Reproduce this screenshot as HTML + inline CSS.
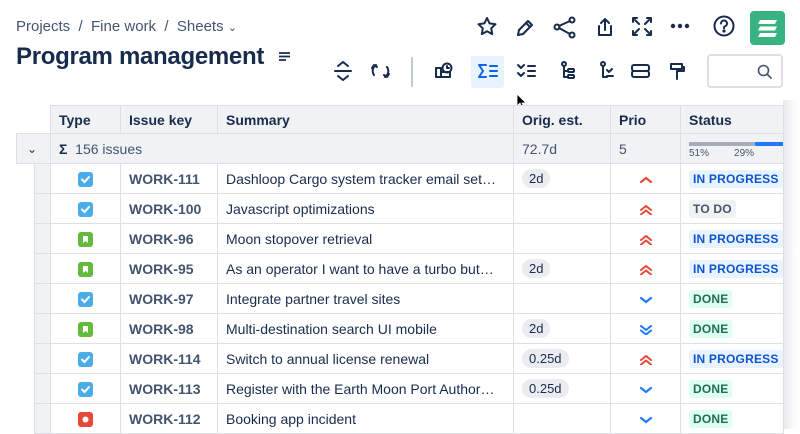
<!DOCTYPE html>
<html><head><style>
*{box-sizing:border-box;margin:0;padding:0}
body{width:800px;height:429px;overflow:hidden;background:#fff;font-family:"Liberation Sans",sans-serif;color:#172b4d;position:relative}
.abs{position:absolute}
.bc{left:16px;top:18px;font-size:15px;color:#44546f;white-space:nowrap}
.title{left:16px;top:43px;font-size:24px;font-weight:bold;color:#172b4d;letter-spacing:-0.3px}
svg{position:absolute}
table{position:absolute;left:16px;top:105px;border-collapse:collapse;font-size:14px;table-layout:fixed;width:767px}
td,th{height:30px;border:1px solid #dcdfe4;padding:0 8px;white-space:nowrap;overflow:hidden;text-overflow:ellipsis;text-align:left}
th{height:28px;background:#f1f2f4;font-weight:bold;color:#172b4d}
.grp td{background:#f1f2f4;color:#44546f}
.key{color:#44546f;font-weight:bold}
.pill{display:inline-block;background:#ebecf0;border-radius:10px;padding:2px 7px;font-size:13px;color:#172b4d}
.lz{display:inline-block;font-size:12px;font-weight:bold;padding:2px 4px;border-radius:3px;letter-spacing:.2px}
.ip{background:#e9f2ff;color:#0c55cf}
.td{background:#f1f2f4;color:#44546f}
.dn{background:#dcfff1;color:#216e4e}
.ic{display:inline-block;width:15px;height:15px;border-radius:3px;position:relative;vertical-align:middle}
.ic svg{left:0;top:0}
.task{background:#4bade8}
.story{background:#63ba3c}
.bug{background:#e5493a}
.g1{border:none;background:#fff;border-right:1px solid #dcdfe4}
.g2{background:#f1f2f4;border-left:none}
.pr{text-align:center;position:relative}
.pr svg{position:static;vertical-align:middle}
</style></head><body>
<div class="abs bc">Projects &nbsp;/&nbsp; Fine work &nbsp;/&nbsp; Sheets <span style="font-size:11px">&#8964;</span></div>
<div class="abs title">Program management</div>
<svg style="left:278px;top:51px" width="14" height="12" viewBox="0 0 14 12"><path d="M1 2h11M1 5.5h11M1 9h7" stroke="#172b4d" stroke-width="1.8"/></svg>
<svg style="left:470px;top:14px" width="320" height="30" viewBox="0 0 320 30" fill="none" stroke="#172b4d" stroke-width="2" stroke-linejoin="round" stroke-linecap="round">
<path d="M17 4l2.6 5.4 5.9.8-4.3 4.1 1 5.8-5.2-2.8-5.2 2.8 1-5.8-4.3-4.1 5.9-.8z"/>
<path d="M48 21l1-5 9-9 4 4-9 9z M56 9l4 4"/>
<circle cx="87" cy="13" r="2.5"/><circle cx="102" cy="6" r="2.5"/><circle cx="102" cy="21" r="2.5"/><path d="M89 12l11-5M89 14l11 6"/>
<path d="M135 5v11M131 9l4-4 4 4M129 12v9h12v-9"/>
<path d="M163 8V4h4M177 4h4v4M163 17v4h4M181 17v4h-4M165 6l4 4M179 6l-4 4M165 19l4-4M179 19l-4-4"/>
<circle cx="203" cy="12" r="1.2" fill="#172b4d"/><circle cx="210" cy="12" r="1.2" fill="#172b4d"/><circle cx="217" cy="12" r="1.2" fill="#172b4d"/>
<circle cx="254" cy="12" r="9.5"/><path d="M251 9.5a3 3 0 1 1 4 2.8c-1 .4-1 1-1 2"/><circle cx="254" cy="17" r=".6" fill="#172b4d"/>
</svg>
<div class="abs" style="left:750px;top:11px;width:35px;height:34px;background:#36b37e;border-radius:4px"></div>
<svg style="left:750px;top:11px" width="35" height="34" viewBox="0 0 35 34"><path d="M10 9h17l-2 4H8zM10 15.5h17l-2 4H8zM10 22h17l-2 4H8z" fill="#fff"/></svg>
<svg style="left:330px;top:56px" width="470" height="32" viewBox="0 0 470 32" fill="none" stroke="#172b4d" stroke-width="2" stroke-linejoin="round" stroke-linecap="round">
<path d="M5 15h16M8 10l5-4 5 4M8 20l5 4 5-4"/>
<path d="M46 9a7 7 0 0 0-2 10M55 21a7 7 0 0 0 2-10M42 12l2-3 3 2M59 18l-2 3-3-2"/>
<path d="M82 2v28" stroke="#c1c7d0" stroke-width="2"/>
<path d="M106 12h5v9h-5zM111 16h9v5h-9z"/><circle cx="117" cy="12" r="4.5"/><path d="M117 10v2h2"/>
<rect x="141" y="-2" width="33" height="34" rx="3" fill="#e9f2ff" stroke="none"/>
<path d="M156 9h-7l4 6-4 6h7" stroke="#0c66e4"/><path d="M160 10h7M160 15h7M160 20h7" stroke="#0c66e4"/>
<path d="M188 9l3 3 3-3M188 17l3 3 3-3M198 10h7M198 15h7M198 20h7"/>
<circle cx="234" cy="8" r="2"/><path d="M234 10v11h4M234 15h4"/><rect x="238" y="13" width="6" height="3" rx="1"/><rect x="238" y="19" width="6" height="3" rx="1"/>
<circle cx="273" cy="8" r="2"/><path d="M273 10v11h4M277 14l2 2 3-3M277 20h6"/>
<rect x="302" y="9" width="17" height="6" rx="2"/><rect x="302" y="15" width="17" height="6" rx="2"/>
<path d="M341 8h11v5h-11zM352 11h2v4h-7v3M347 18v5"/>
</svg>
<div class="abs" style="left:707px;top:54px;width:76px;height:34px;border:2px solid #dcdfe4;border-radius:4px"></div>
<svg style="left:757px;top:64px" width="16" height="16" viewBox="0 0 16 16" fill="none" stroke="#44546f" stroke-width="1.6"><circle cx="6.5" cy="6.5" r="5"/><path d="M10 10l4.5 4.5"/></svg>
<svg style="left:516px;top:93px" width="12" height="16" viewBox="0 0 12 16"><path d="M1 1v12l3-3 2 5 2-1-2-4h4z" fill="#000" stroke="#fff" stroke-width=".8"/></svg>
<div class="abs" style="left:783px;top:100px;width:17px;height:329px;background:linear-gradient(90deg,#e5e7ea,#fafbfb 60%,#fff)"></div>
<svg width="0" height="0" style="display:none"><defs>
<symbol id="up" viewBox="0 0 14 10"><path d="M2 7l5-4 5 4" fill="none" stroke="#e5493a" stroke-width="2.2" stroke-linecap="round"/></symbol>
<symbol id="up2" viewBox="0 0 14 10"><path d="M2 5l5-4 5 4M2 9.5l5-4 5 4" fill="none" stroke="#e5493a" stroke-width="2" stroke-linecap="round"/></symbol>
<symbol id="dn" viewBox="0 0 14 10"><path d="M2 3l5 4 5-4" fill="none" stroke="#1d7afc" stroke-width="2.2" stroke-linecap="round"/></symbol>
<symbol id="dn2" viewBox="0 0 14 10"><path d="M2 1l5 4 5-4M2 5.5l5 4 5-4" fill="none" stroke="#1d7afc" stroke-width="2" stroke-linecap="round"/></symbol>
<symbol id="chk" viewBox="0 0 15 15"><path d="M4 7.5l2.5 2.5 4.5-5" fill="none" stroke="#fff" stroke-width="2" stroke-linecap="round"/></symbol>
<symbol id="bm" viewBox="0 0 15 15"><path d="M5 4h5v7l-2.5-2-2.5 2z" fill="#fff"/></symbol>
<symbol id="bg" viewBox="0 0 15 15"><circle cx="7.5" cy="7.5" r="3" fill="#fff"/></symbol>
</defs></svg>
<table>
<colgroup><col style="width:18px"><col style="width:16px"><col style="width:70px"><col style="width:97px"><col style="width:296px"><col style="width:97px"><col style="width:70px"><col style="width:103px"></colgroup>
<tr><th style="background:#fff;border:none;border-bottom:1px solid #dcdfe4"></th><th style="background:#fff;border:none;border-bottom:1px solid #dcdfe4"></th><th>Type</th><th>Issue key</th><th>Summary</th><th>Orig. est.</th><th>Prio</th><th>Status</th></tr>
<tr class="grp"><td colspan="2" style="padding:0 0 0 10px;font-size:12px;color:#172b4d">&#8964;</td><td colspan="3" style="color:#44546f"><b style="color:#172b4d">Σ</b>&nbsp; 156 issues</td><td>72.7d</td><td>5</td><td style="padding-top:4px"><div style="height:4px;background:#a5adba;position:relative;width:95px"><div style="position:absolute;left:66px;width:29px;height:4px;background:#1d7afc"></div></div><div style="font-size:10px;color:#44546f;margin-top:2px">51% &nbsp; &nbsp; &nbsp; &nbsp; 29%</div></td></tr>
<tr><td class="g1"></td><td class="g2"></td><td style="text-align:center"><span class="ic task"><svg width="15" height="15"><use href="#chk"/></svg></span></td><td class="key">WORK-111</td><td>Dashloop Cargo system tracker email set…</td><td><span class="pill">2d</span></td><td class="pr"><svg width="14" height="10"><use href="#up"/></svg></td><td><span class="lz ip">IN PROGRESS</span></td></tr>
<tr><td class="g1"></td><td class="g2"></td><td style="text-align:center"><span class="ic task"><svg width="15" height="15"><use href="#chk"/></svg></span></td><td class="key">WORK-100</td><td>Javascript optimizations</td><td></td><td class="pr"><svg width="14" height="10"><use href="#up2"/></svg></td><td><span class="lz td">TO DO</span></td></tr>
<tr><td class="g1"></td><td class="g2"></td><td style="text-align:center"><span class="ic story"><svg width="15" height="15"><use href="#bm"/></svg></span></td><td class="key">WORK-96</td><td>Moon stopover retrieval</td><td></td><td class="pr"><svg width="14" height="10"><use href="#up2"/></svg></td><td><span class="lz ip">IN PROGRESS</span></td></tr>
<tr><td class="g1"></td><td class="g2"></td><td style="text-align:center"><span class="ic story"><svg width="15" height="15"><use href="#bm"/></svg></span></td><td class="key">WORK-95</td><td>As an operator I want to have a turbo but…</td><td><span class="pill">2d</span></td><td class="pr"><svg width="14" height="10"><use href="#up2"/></svg></td><td><span class="lz ip">IN PROGRESS</span></td></tr>
<tr><td class="g1"></td><td class="g2"></td><td style="text-align:center"><span class="ic task"><svg width="15" height="15"><use href="#chk"/></svg></span></td><td class="key">WORK-97</td><td>Integrate partner travel sites</td><td></td><td class="pr"><svg width="14" height="10"><use href="#dn"/></svg></td><td><span class="lz dn">DONE</span></td></tr>
<tr><td class="g1"></td><td class="g2"></td><td style="text-align:center"><span class="ic story"><svg width="15" height="15"><use href="#bm"/></svg></span></td><td class="key">WORK-98</td><td>Multi-destination search UI mobile</td><td><span class="pill">2d</span></td><td class="pr"><svg width="14" height="10"><use href="#dn2"/></svg></td><td><span class="lz dn">DONE</span></td></tr>
<tr><td class="g1"></td><td class="g2"></td><td style="text-align:center"><span class="ic task"><svg width="15" height="15"><use href="#chk"/></svg></span></td><td class="key">WORK-114</td><td>Switch to annual license renewal</td><td><span class="pill">0.25d</span></td><td class="pr"><svg width="14" height="10"><use href="#up2"/></svg></td><td><span class="lz ip">IN PROGRESS</span></td></tr>
<tr><td class="g1"></td><td class="g2"></td><td style="text-align:center"><span class="ic task"><svg width="15" height="15"><use href="#chk"/></svg></span></td><td class="key">WORK-113</td><td>Register with the Earth Moon Port Author…</td><td><span class="pill">0.25d</span></td><td class="pr"><svg width="14" height="10"><use href="#dn"/></svg></td><td><span class="lz dn">DONE</span></td></tr>
<tr><td class="g1"></td><td class="g2"></td><td style="text-align:center"><span class="ic bug"><svg width="15" height="15"><use href="#bg"/></svg></span></td><td class="key">WORK-112</td><td>Booking app incident</td><td></td><td class="pr"><svg width="14" height="10"><use href="#dn"/></svg></td><td><span class="lz dn">DONE</span></td></tr>
</table>
</body></html>
